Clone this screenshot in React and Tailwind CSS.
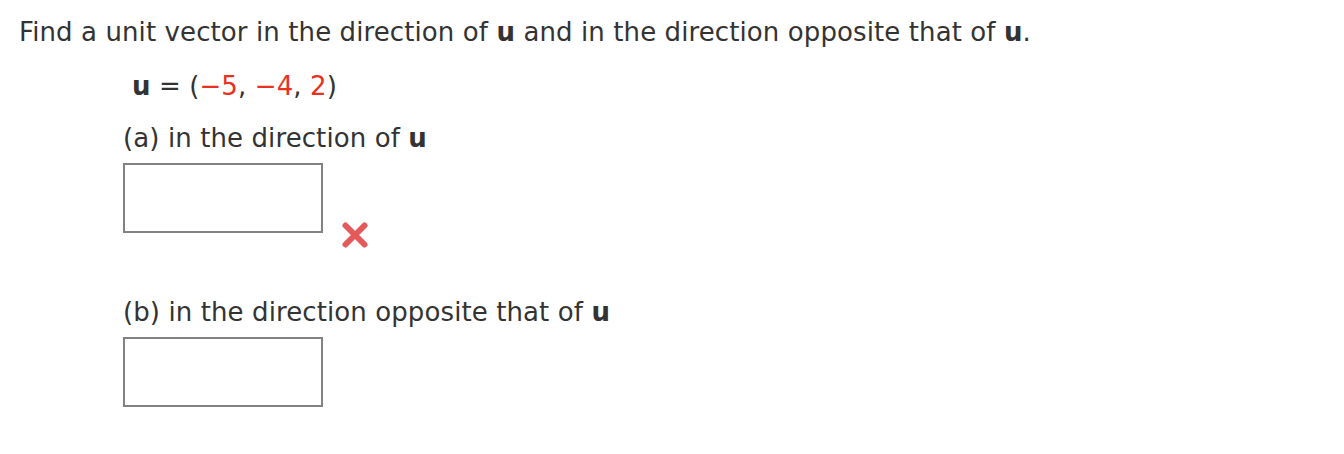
export default function App() {
  return (
    <div className="min-h-[454px] bg-white text-[#333333] text-[26px] leading-none tracking-[0.1px] pl-[19px] pt-[19px]" style={{ fontFamily: '"DejaVu Sans", Verdana, sans-serif' }}>
      <p className="h-[26px] whitespace-nowrap">
        Find a unit vector in the direction of <b>u</b> and in the direction opposite that of <b>u</b>.
      </p>
      <p className="mt-[28px] pl-[113px] h-[26px]">
        <b>u</b> = (<span className="text-[#e8321f]">&minus;5</span>, <span className="text-[#e8321f]">&minus;4</span>, <span className="text-[#e8321f]">2</span>)
      </p>
      <div className="pl-[104px]">
        <p className="mt-[26px] h-[26px]">
          (a) in the direction of <b>u</b>
        </p>
        <div className="mt-[12px] flex items-end">
          <div className="w-[200px] h-[70px] border-2 border-[#828282] bg-white" />
          <svg className="ml-[18px] -mb-[16px]" width="28" height="28" viewBox="0 0 28 28">
            <path d="M4.5 4.5 L23.5 23.5 M23.5 4.5 L4.5 23.5" stroke="#e45a5a" strokeWidth="6" strokeLinecap="round" />
          </svg>
        </div>
        <p className="mt-[66px] h-[26px]">
          (b) in the direction opposite that of <b>u</b>
        </p>
        <div className="mt-[12px] w-[200px] h-[70px] border-2 border-[#828282] bg-white" />
      </div>
    </div>
  );
}
